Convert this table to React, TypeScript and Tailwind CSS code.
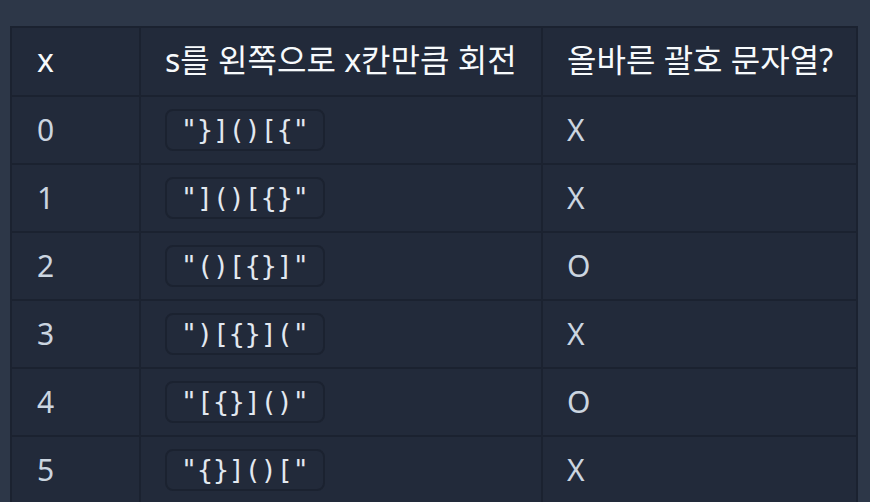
import React from 'react';

const rows = [
  { x: '0', s: '"}]()[{"', ok: 'X' },
  { x: '1', s: '"]()[{}"', ok: 'X' },
  { x: '2', s: '"()[{}]"', ok: 'O' },
  { x: '3', s: '")[{}]("', ok: 'X' },
  { x: '4', s: '"[{}]()"', ok: 'O' },
  { x: '5', s: '"{}]()["', ok: 'X' },
];

const sans = { fontFamily: '"Noto Sans", "Noto Sans CJK KR", sans-serif' };

export default function App() {
  return (
    <div className="min-h-[502px] w-[870px] overflow-hidden bg-[#2d3748] pl-[10px] pt-[26px]" style={sans}>
      <table className="w-[848px] table-fixed border-collapse border-2 border-[#1b2230] bg-[#222a3a]">
        <colgroup>
          <col className="w-[129px]" />
          <col className="w-[402px]" />
          <col />
        </colgroup>
        <thead>
          <tr className="h-[69px] text-[32px] leading-none text-[#f7fafc]">
            <th className="border-2 border-[#1b2230] pb-[4px] pl-[25px] text-left font-normal">x</th>
            <th className="border-2 border-[#1b2230] pb-[4px] pl-[24px] text-left font-normal">s를 왼쪽으로 x칸만큼 회전</th>
            <th className="border-2 border-[#1b2230] pb-[4px] pl-[24px] text-left font-normal">올바른 괄호 문자열?</th>
          </tr>
        </thead>
        <tbody>
          {rows.map((r) => (
            <tr key={r.x} className="h-[68px] text-[30px] leading-none text-[#cbd5e0]">
              <td className="border-2 border-[#1b2230] pl-[25px]">{r.x}</td>
              <td className="border-2 border-[#1b2230] pl-[24px]">
                <span className="inline-flex h-[42px] items-center rounded-[8px] border-2 border-[#1b2230] px-[14px] font-['DejaVu_Sans_Mono',monospace] text-[26.5px] text-[#e2e8f0]">
                  {r.s}
                </span>
              </td>
              <td className="border-2 border-[#1b2230] pl-[24px]">{r.ok}</td>
            </tr>
          ))}
        </tbody>
      </table>
    </div>
  );
}
